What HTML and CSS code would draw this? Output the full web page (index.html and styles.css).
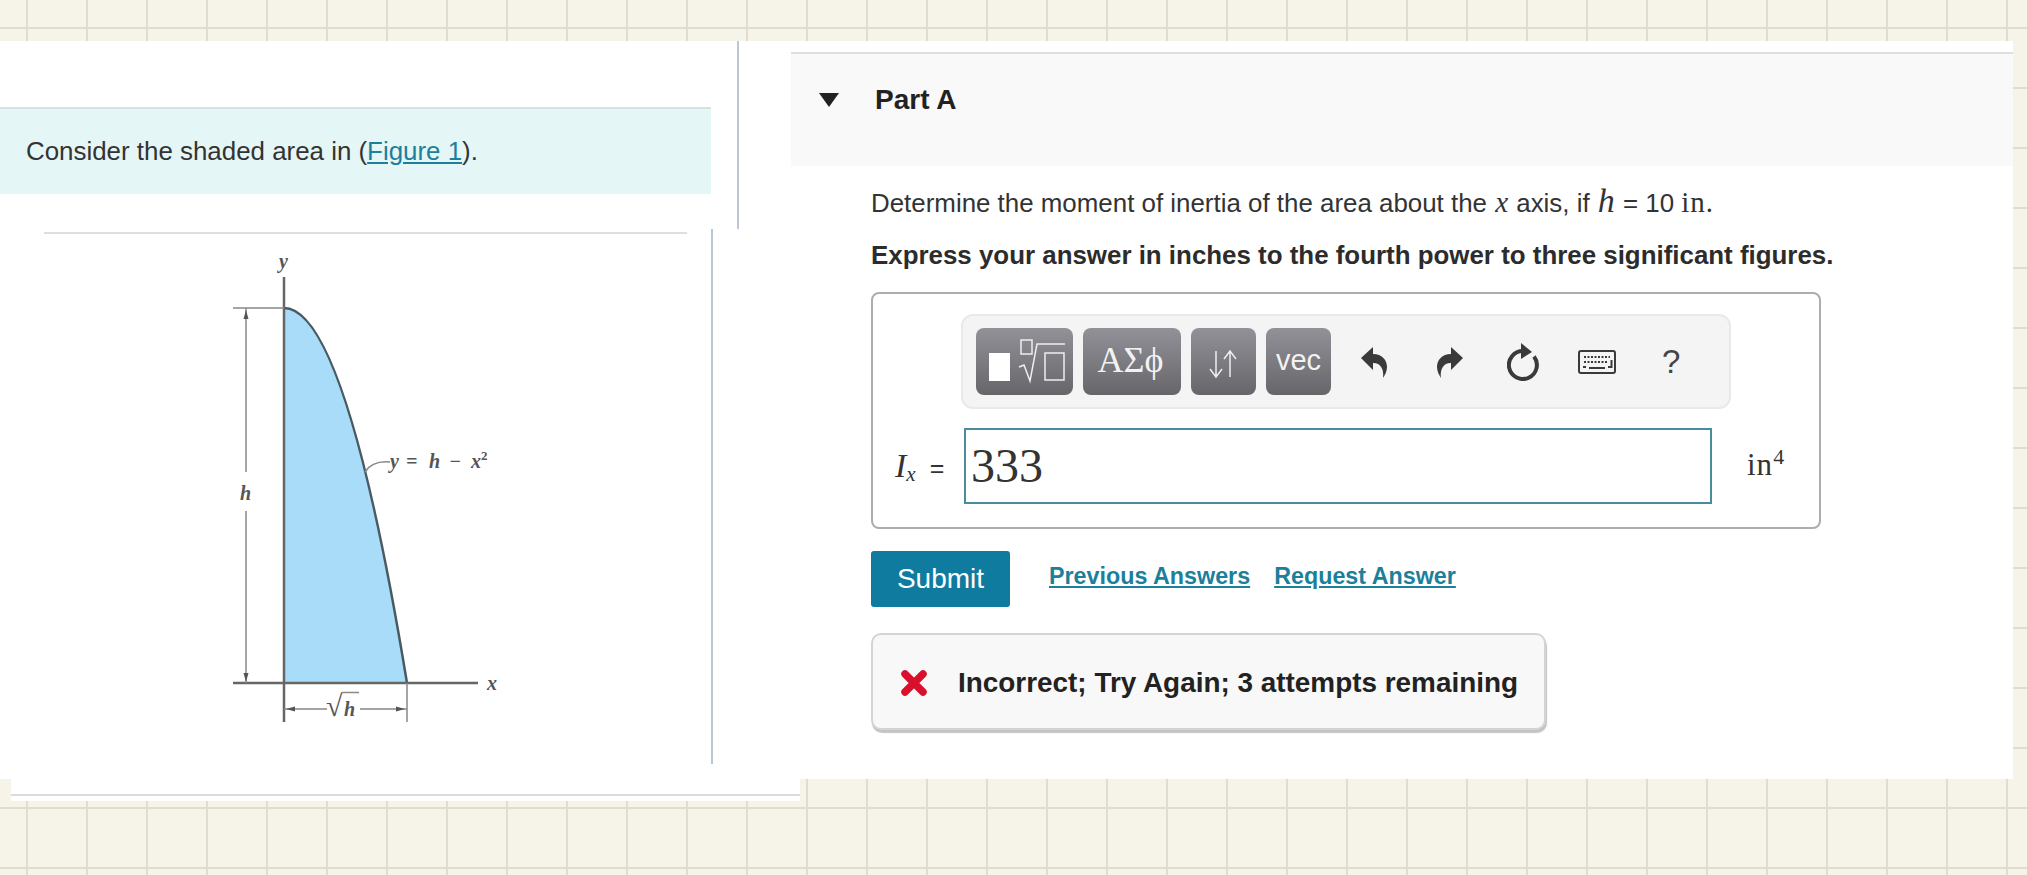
FILE: index.html
```html
<!DOCTYPE html>
<html lang="en">

<head>
  <meta charset="UTF-8">
  <meta name="viewport" content="width=device-width, initial-scale=1">
  <title>Part A</title>
  <link rel="stylesheet" href="styles.css">
</head>

<body>

  <div class="sheet">
    <div class="left">
      <div class="intro-wrap">
        <p class="intro">Consider the shaded area in (<a href="#">Figure 1</a>).</p>
      </div>
      <div class="figure">
        <div class="figure-rule"></div>
        <svg class="figure-svg" width="340" height="500" viewBox="200 240 340 500">
          <path class="area" d="M284 309 Q345.5 309 407 684 L284 684 Z" />
          <path class="curve" d="M284 309 Q345.5 309 407 684" />
          <path class="axis" d="M284 278 V723 M233 684 H478" />
          <path class="dim" d="M233 309 H284 M246 309 V473 M246 512 V684 M407 684 V723 M284 710 H327 M360 710 H407" />
          <path class="tip" d="M246 311 L243.5 320 H248.5 Z M246 683 L243.5 674 H248.5 Z M286 710 L295 707.5 V712.5 Z M405 710 L396 707.5 V712.5 Z" />
          <path class="dim" d="M365 473 C370 465 378 462 390 463" />
          <text class="fig-label" x="279" y="269">y</text>
          <text class="fig-label" x="487" y="691">x</text>
          <text class="fig-label" x="240" y="501">h</text>
          <text class="fig-label"><tspan x="390" y="469">y</tspan><tspan x="406">=</tspan><tspan x="429">h</tspan><tspan x="449">−</tspan><tspan x="471">x</tspan></text>
          <text class="fig-sup" x="481" y="461">2</text>
          <text class="fig-root" x="326" y="717">√</text>
          <path class="dim" d="M342 693.5 H359" />
          <text class="fig-label" x="344" y="717">h</text>
        </svg>
      </div>
    </div>

    <div class="part">
      <div class="part-head">
        <span class="caret"></span>
        <h3>Part A</h3>
      </div>
      <div class="part-body">
        <p class="question">Determine the moment of inertia of the area about the <i class="mvar">x</i> axis, if <i class="mvar big">h</i> = 10 <span class="mrm">in.</span></p>
        <p class="instruction">Express your answer in inches to the fourth power to three significant figures.</p>

        <div class="answer-box">
          <div class="toolbar">
            <button class="tool tool-template">
              <svg width="97" height="67" viewBox="0 0 97 67">
                <rect x="13" y="25" width="21" height="28" fill="#fff" />
                <path class="tmpl-line" d="M43 39 L48 37 L54 53 L61 16 H89" />
                <rect class="tmpl-line" x="45" y="12" width="11" height="14" />
                <rect class="tmpl-line" x="69" y="25" width="19" height="27" />
              </svg>
            </button>
            <button class="tool tool-greek">ΑΣϕ</button>
            <button class="tool tool-arrows">
              <svg width="65" height="67" viewBox="0 0 65 67">
                <path class="tmpl-line" d="M25 23 V49 M19 41 L25 49 L31 41 M39 49 V23 M33 31 L39 23 L45 31" />
              </svg>
            </button>
            <button class="tool tool-vec">vec</button>
            <span class="action action-undo">
              <svg width="28" height="32" viewBox="0 0 28 32">
                <path d="M1 12 L13 1 V8 C22 8 27 14 27 21 C27 25 25 29 23 32 C24 25 22 17 13 17 V24 Z" />
              </svg>
            </span>
            <span class="action action-redo">
              <svg width="28" height="32" viewBox="0 0 28 32">
                <path d="M27 12 L15 1 V8 C6 8 1 14 1 21 C1 25 3 29 5 32 C4 25 6 17 15 17 V24 Z" />
              </svg>
            </span>
            <span class="action action-reset">
              <svg width="32" height="38" viewBox="0 0 32 38">
                <path class="reset-ring" d="M16 8 A14 14 0 1 0 27 13.5" />
                <path d="M14 0 L25 9 L14 16 Z" />
              </svg>
            </span>
            <span class="action action-keys">
              <svg width="38" height="24" viewBox="0 0 38 24">
                <rect class="key-frame" x="1" y="1" width="36" height="22" rx="2" />
                <path class="key-dots" d="M6 7 H32 M6 12 H29" />
                <path class="key-line" d="M5 17 H8 M11 18 H27 M30 17 H33.5 V10" />
              </svg>
            </span>
            <span class="action action-help">?</span>
          </div>

          <div class="answer-row">
            <div class="answer-label"><i>I</i><sub>x</sub><span class="eq">=</span></div>
            <div class="answer-input">333</div>
            <div class="answer-unit">in<sup>4</sup></div>
          </div>
        </div>

        <div class="submit-row">
          <button class="submit">Submit</button>
          <a class="link-first" href="#">Previous Answers</a>
          <a href="#">Request Answer</a>
        </div>

        <div class="feedback">
          <svg width="28" height="28" viewBox="0 0 28 28">
            <path class="cross" d="M5 5 L23 23 M23 5 L5 23" />
          </svg>
          <span>Incorrect; Try Again; 3 attempts remaining</span>
        </div>
      </div>
    </div>
  </div>

  <div class="sheet-foot"></div>

</body>

</html>
```

FILE: styles.css
```css
* {
  box-sizing: border-box;
  margin: 0;
  padding: 0;
}

body {
  height: 875px;
  overflow: hidden;
  padding-top: 41px;
  font-family: "Liberation Sans", Arial, sans-serif;
  color: #333;
  background-color: #f6f4e8;
  background-image:
    linear-gradient(to right, #e0ddcf 2px, transparent 2px),
    linear-gradient(to bottom, #e0ddcf 2px, transparent 2px);
  background-size: 60px 60px;
  background-position: 26px 27px;
}

a {
  color: #1c7f9c;
}

.sheet {
  display: flex;
  width: 2013px;
  height: 738px;
  background: #fff;
}

.sheet-foot {
  width: 789px;
  height: 22px;
  margin-left: 11px;
  padding-top: 15px;
  background: #fff;
}

.sheet-foot::before {
  content: "";
  display: block;
  height: 2px;
  background: #dcdcdc;
}

/* left column */
.left {
  width: 791px;
  flex: none;
}

.intro-wrap {
  width: 739px;
  height: 188px;
  padding-top: 66px;
  border-right: 2px solid #b9c8d6;
}

.intro {
  width: 711px;
  height: 87px;
  padding: 0 0 0 26px;
  font-size: 25.9px;
  line-height: 85px;
  background: #e5f6f6;
  border-top: 2px solid #d4e2e3;
}

.figure {
  width: 713px;
  height: 535px;
  padding-top: 3px;
  border-right: 2px solid #b9c8d6;
}

.figure-rule {
  width: 643px;
  height: 2px;
  margin-left: 44px;
  background: #dedede;
}

.figure-svg {
  display: block;
  margin: 5px 0 0 200px;
}

.area {
  fill: #a8dcf8;
}

.curve {
  fill: none;
  stroke: #4a5a63;
  stroke-width: 2.5;
}

.axis {
  fill: none;
  stroke: #666;
  stroke-width: 2.5;
}

.dim {
  fill: none;
  stroke: #888;
  stroke-width: 1.5;
}

.tip {
  fill: #555;
}

.fig-label {
  font-family: "Liberation Serif", serif;
  font-style: italic;
  font-weight: bold;
  font-size: 20px;
  fill: #555;
}

.fig-sup {
  font-family: "Liberation Serif", serif;
  font-weight: bold;
  font-size: 13px;
  fill: #555;
}

.fig-root {
  font-family: "Liberation Serif", serif;
  font-size: 30px;
  fill: #555;
}

/* right column */
.part {
  flex: 1;
  padding-top: 11px;
}

.part-head {
  display: flex;
  align-items: center;
  gap: 36px;
  height: 114px;
  padding: 0 0 20px 28px;
  background: #f9f9f9;
  border-top: 2px solid #dedede;
}

.caret {
  width: 0;
  height: 0;
  border-left: 10.5px solid transparent;
  border-right: 10.5px solid transparent;
  border-top: 14px solid #222;
}

.part-head h3 {
  font-size: 28px;
  color: #222;
}

.part-body {
  padding: 20px 0 0 80px;
}

.question,
.instruction {
  font-size: 25.9px;
  line-height: 34px;
}

.mvar {
  font-family: "Liberation Serif", serif;
  font-size: 29px;
  line-height: 20px;
  margin: 0 1px;
}

.mrm {
  font-family: "Liberation Serif", serif;
  font-size: 29px;
  line-height: 20px;
  letter-spacing: 1px;
}

.big {
  font-size: 34px;
}

.instruction {
  margin-top: 18px;
  font-weight: bold;
  color: #2c2c2c;
}

.answer-box {
  width: 950px;
  height: 237px;
  margin-top: 20px;
  padding-top: 20px;
  border: 2px solid #adadad;
  border-radius: 8px;
}

.toolbar {
  display: flex;
  align-items: center;
  width: 770px;
  height: 95px;
  margin-left: 88px;
  padding-left: 13px;
  background: #f4f4f4;
  border: 2px solid #e9e9e9;
  border-radius: 12px;
}

.tool {
  height: 67px;
  margin-right: 10px;
  color: #f2f2f2;
  background: linear-gradient(#919198, #66666a);
  border: none;
  border-radius: 8px;
}

.tool svg {
  display: block;
}

.tool-template {
  width: 97px;
}

.tmpl-line {
  fill: none;
  stroke: #eee;
  stroke-width: 1.5;
}

.tool-greek {
  width: 98px;
  padding: 0 3px 4px 0;
  font-family: "Liberation Serif", serif;
  font-size: 36px;
}

.tool-arrows {
  width: 65px;
}

.tool-vec {
  width: 65px;
  padding-bottom: 3px;
  margin-right: 0;
  font-family: "Liberation Sans", sans-serif;
  font-size: 29px;
}

.action {
  display: flex;
  justify-content: center;
  fill: #3a3a3a;
}

.action-undo {
  margin-left: 29px;
}

.action-redo {
  margin-left: 48px;
}

.action-reset {
  margin-left: 43px;
}

.action-keys {
  margin-left: 39px;
}

.action-help {
  margin-left: 46px;
  font-size: 33px;
  color: #444;
}

.reset-ring {
  fill: none;
  stroke: #3a3a3a;
  stroke-width: 4;
}

.key-frame {
  fill: #f4f4f4;
  stroke: #3a3a3a;
  stroke-width: 2;
}

.key-dots {
  fill: none;
  stroke: #3a3a3a;
  stroke-width: 2;
  stroke-dasharray: 2 1.5;
}

.key-line {
  fill: none;
  stroke: #3a3a3a;
  stroke-width: 2;
}

.answer-row {
  display: flex;
  align-items: center;
  margin-top: 19px;
  padding-left: 22px;
}

.answer-label {
  width: 69px;
  font-family: "Liberation Serif", serif;
  font-size: 34px;
}

.answer-label sub {
  font-size: 21px;
  font-style: italic;
  line-height: 0;
  vertical-align: -4px;
}

.eq {
  margin-left: 14px;
  font-family: "Liberation Sans", sans-serif;
  font-size: 25px;
}

.answer-input {
  width: 748px;
  height: 76px;
  padding-left: 5px;
  font-family: "Liberation Serif", serif;
  font-size: 48px;
  line-height: 72px;
  background: #fff;
  border: 2px solid #4a8c9b;
}

.answer-unit {
  margin-left: 35px;
  padding-bottom: 3px;
  font-family: "Liberation Serif", serif;
  font-size: 31px;
  letter-spacing: 1px;
}

.answer-unit sup {
  font-size: 22px;
  line-height: 0;
}

.submit-row {
  display: flex;
  align-items: center;
  margin-top: 22px;
}

.submit {
  width: 139px;
  height: 56px;
  font-family: "Liberation Sans", sans-serif;
  font-size: 28px;
  color: #fff;
  background: #0f7c9f;
  border: none;
  border-radius: 3px;
}

.submit-row a {
  margin-left: 24px;
  margin-bottom: 5px;
  font-size: 23.3px;
  font-weight: bold;
}

.submit-row .link-first {
  margin-left: 39px;
}

.feedback {
  display: flex;
  align-items: center;
  gap: 30px;
  width: 675px;
  height: 97px;
  margin-top: 26px;
  padding: 2px 0 0 27px;
  font-size: 27.9px;
  font-weight: bold;
  color: #222;
  background: #f8f8f8;
  border: 2px solid #d4d4d4;
  border-radius: 10px;
  box-shadow: 1px 3px 1px #c4c4c4;
}

.cross {
  stroke: #d9102c;
  stroke-width: 7.5;
  stroke-linecap: round;
}
```
